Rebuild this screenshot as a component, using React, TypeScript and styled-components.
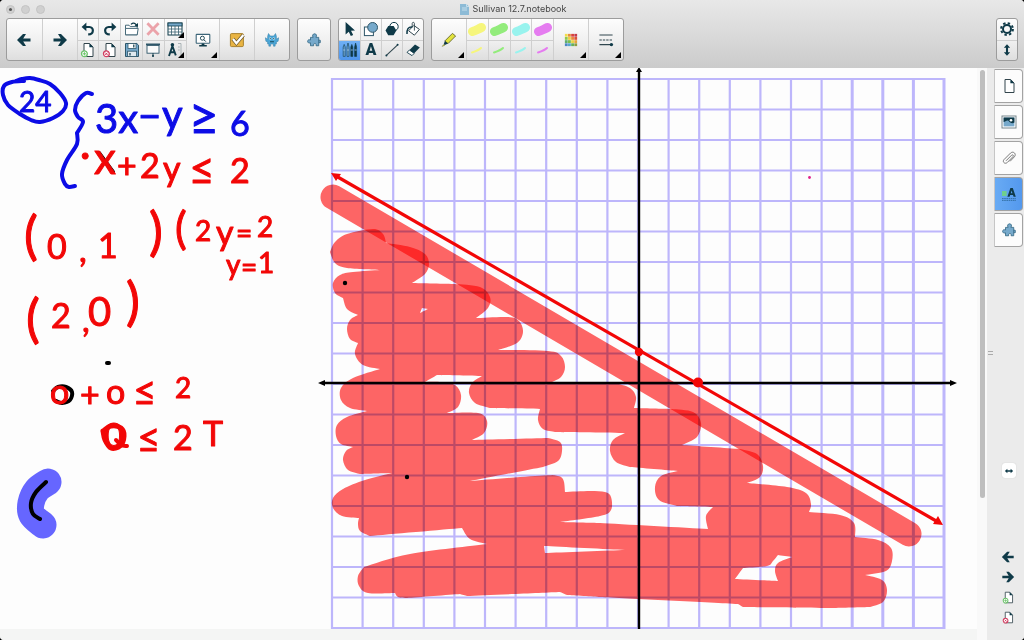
import React from 'react';
import styled, { createGlobalStyle, css } from 'styled-components';

const INK = '#0f3a48';
const STEEL = '#76a9cb';
const RED = '#f20707';
const BLUE = '#0c0ce6';

const GlobalStyle = createGlobalStyle`
  *, *::before, *::after { box-sizing: border-box; }
  html, body, #root { height: 100%; }
  body { margin: 0; background: #000; font-family: Inter, "Liberation Sans", sans-serif; }
`;

/* ---------- layout ---------- */

const Window = styled.div`
  display: flex;
  flex-direction: column;
  min-height: 100%;
  border-radius: 4px;
  overflow: hidden;
  background: #ebebeb;
`;

const Chrome = styled.header`
  background: linear-gradient(#e8e8e8, #dadada 50%, #cbcbcb);
`;

const TitleBar = styled.div`
  display: grid;
  grid-template-columns: 1fr auto 1fr;
  align-items: center;
  height: 18px;
  padding: 0 4px 0 6px;
`;

const Lights = styled.div`
  display: flex;
  gap: 6px;
`;

const Light = styled.button<{ $dot?: boolean }>`
  display: grid;
  place-items: center;
  width: 9px;
  height: 9px;
  padding: 0;
  border: 1px solid #c4c4c4;
  border-radius: 50%;
  background: #d0d0d0;
  &::after {
    content: '';
    width: 3px;
    height: 3px;
    border-radius: 50%;
    background: ${p => (p.$dot ? '#555' : 'transparent')};
  }
`;

const Title = styled.h1`
  display: flex;
  align-items: center;
  gap: 4px;
  margin: 0;
  font: 400 9px/16px Inter, "Liberation Sans", sans-serif;
  color: #444;
`;

const Toolbar = styled.div`
  display: flex;
  gap: 7px;
  height: 50px;
  padding: 0 6px 7px;
`;

const Group = styled.div<{ $width: number; $cols: string }>`
  display: grid;
  grid-template-columns: ${p => p.$cols};
  width: ${p => p.$width}px;
  border: 1px solid #9c9c9c;
  border-radius: 3px;
  background: linear-gradient(#fdfdfd, #f1f1f1 50%, #dedede);
  overflow: hidden;
`;

const RightGroup = styled(Group)`
  margin-left: auto;
`;

const Pairs = styled.div<{ $cols: number }>`
  display: grid;
  grid-template-columns: repeat(${p => p.$cols}, 1fr);
  grid-template-rows: 1fr 1fr;
`;

const Tool = styled.button<{ $active?: boolean; $more?: boolean; $bottom?: boolean; $first?: boolean }>`
  position: relative;
  display: grid;
  place-items: center;
  min-width: 0;
  padding: 0;
  border: 0;
  border-left: ${p => (p.$first ? '0' : '1px solid #cfcfcf')};
  border-top: ${p => (p.$bottom ? '1px solid #cfcfcf' : '0')};
  background: ${p => (p.$active ? 'linear-gradient(#6fb0f5, #4f95ec)' : 'transparent')};
  ${p => p.$more && css`
    &::after {
      content: '';
      position: absolute;
      right: 2px;
      bottom: 2px;
      border: 3px solid #000;
      border-top-color: transparent;
      border-left-color: transparent;
    }
  `}
`;

const Body = styled.div`
  flex: 1;
  display: grid;
  grid-template-columns: 1fr 10px 37px;
`;

const Page = styled.main`
  background: #f4f5f4;
`;

const Sheet = styled.svg`
  display: block;
  width: 100%;
  height: auto;
  background: #fdfdfd;
`;

const ScrollTrack = styled.div`
  padding: 2px 2px 0 3px;
  background: #f9f9f9;
`;

const ScrollThumb = styled.div`
  height: 75%;
  border-radius: 3px;
  background: #bebebe;
`;

const Sidebar = styled.aside`
  display: flex;
  flex-direction: column;
  background: #ebebeb;
`;

const Tabs = styled.nav`
  display: flex;
  flex-direction: column;
  gap: 2px;
  padding: 1px 1px 0 7px;
`;

const Tab = styled.button<{ $active?: boolean }>`
  display: grid;
  place-items: center;
  height: 34px;
  padding: 0;
  border: 1px solid #a3a3a3;
  border-left-color: #c6c6c6;
  border-radius: 0 4px 4px 0;
  background: ${p => (p.$active ? 'linear-gradient(90deg, #69abf4, #5398ed)' : '#fcfcfc')};
`;

const Handle = styled.div`
  width: 5px;
  height: 4px;
  margin: 104px 0 108px 1px;
  border-top: 1px solid #aaa;
  border-bottom: 1px solid #aaa;
`;

const WidthButton = styled.button`
  display: grid;
  place-items: center;
  width: 14px;
  height: 15px;
  margin-left: 15px;
  padding: 0;
  border: 0;
  border-radius: 3px;
  background: #fff;
  box-shadow: 0 0 1px #bbb;
`;

const PageNav = styled.div`
  display: flex;
  flex-direction: column;
  align-items: center;
  gap: 4px;
  margin-top: auto;
  padding: 0 0 15px 5px;
`;

const NavButton = styled.button`
  display: grid;
  place-items: center;
  width: 16px;
  height: 16px;
  padding: 0;
  border: 0;
  background: transparent;
`;

const Handwriting = styled.text`
  font-family: Lato, "DejaVu Sans", sans-serif;
  font-weight: 400;
  stroke-linejoin: round;
  stroke-width: 1px;
`;

/* ---------- icons ---------- */

const Svg = ({ s = 16, children }: { s?: number; children: React.ReactNode }) => (
  <svg width={s} height={s} viewBox="0 0 16 16" fill="none" aria-hidden="true">{children}</svg>
);

const Arrow = ({ right, s = 16 }: { right?: boolean; s?: number }) => (
  <Svg s={s}>
    <path transform={right ? 'matrix(-1 0 0 1 16 0)' : undefined} fill={INK}
      d="M1 8 7 2H10L7.200 6.500H14.500V9.500H7.200L10 14H7Z" />
  </Svg>
);

const Undo = ({ flip }: { flip?: boolean }) => (
  <Svg>
    <g transform={flip ? 'matrix(-1 0 0 1 16 0)' : undefined}>
      <path d="M4 6H9.4C14 6 14.4 13.4 8.2 13.4" stroke={INK} strokeWidth="2.2" />
      <path d="M1.6 6 6.4 1.6V10.2Z" fill={INK} />
    </g>
  </Svg>
);

const GREEN = '#6cc36a';
const PINK = '#d33d60';

const PageIcon = ({ badge, s }: { badge?: string; s?: number }) => (
  <Svg s={s}>
    <path d="M4 1.5H9.6L13 5V14.5H4Z" fill="#fff" stroke="#32454c" strokeWidth="1" />
    <path d="M9.4 1.2V5.2H13.3Z" fill={INK} />
    {badge && <>
      <circle cx="4.4" cy="11.8" r="2.9" fill="#fff" stroke={badge} strokeWidth="1.3" />
      {badge === PINK
        ? <path d="m3.2 10.6 2.4 2.4M5.6 10.6 3.2 13" stroke={badge} />
        : <path d="M4.4 10.2v3.2M2.8 11.8H6" stroke={badge} />}
    </>}
  </Svg>
);

const Folder = () => (
  <Svg>
    <path d="M1.5 13.8V4.2H5L6.2 5.6H13.2V13.8Z" fill="#fff" stroke="#476a79" />
    <path d="M1.5 7.4H14.2L13.2 13.8H1.5Z" fill="#fff" stroke="#476a79" />
    <path d="M7 3.4C9 1.4 11 1.8 12.4 4" stroke={INK} strokeWidth="1.3" />
    <path d="M10.6 4.4 14 2V6Z" fill={INK} />
  </Svg>
);

const Cross = () => (
  <Svg><path d="M2.4 2.2 13.6 13.8M13.6 2.2 2.4 13.8" stroke="#eba3aa" strokeWidth="2.8" /></Svg>
);

const Table = () => (
  <Svg>
    <rect x="1" y="2" width="14" height="12" fill="#fff" stroke={INK} />
    <rect x="1" y="2" width="14" height="3" fill={STEEL} stroke={INK} strokeWidth=".8" />
    <path d="M1 8H15M1 11H15M4.5 5V14M8 5V14M11.5 5V14" stroke="#37606f" strokeWidth=".8" />
  </Svg>
);

const Floppy = () => (
  <Svg>
    <path d="M1.5 1.5H12.8L14.5 3.2V14.5H1.5Z" fill={STEEL} stroke="#2e5669" />
    <rect x="4" y="1.5" width="8" height="5" fill="#fff" stroke="#2e5669" strokeWidth=".8" />
    <rect x="3.6" y="9.2" width="9" height="5.3" fill="#dfe9ef" stroke="#2e5669" strokeWidth=".8" />
    <path d="M9.8 2.6V5.4M6 11V13.6" stroke={INK} strokeWidth="1.2" />
  </Svg>
);

const Shade = () => (
  <Svg>
    <rect x="2" y="3.4" width="12" height="7.8" fill="#fafafa" stroke="#2e5669" strokeWidth=".9" />
    <path d="M1 2.4H15" stroke="#2e5669" strokeWidth="1.8" />
    <path d="M8 11.2V14" stroke={INK} /><circle cx="8" cy="14" r="1.1" fill={INK} />
  </Svg>
);

const Compass = () => (
  <Svg>
    <path d="M5.4 4 2 14M5.4 4 8.8 13.4M3.6 10.2H7.6" stroke={INK} strokeWidth="1.9" />
    <circle cx="5.4" cy="2.8" r="1.8" fill={INK} />
    <path d="M11 1.5H14V13M11 5H12.8M11 8H12.8" stroke="#9aa6aa" strokeWidth=".8" />
  </Svg>
);

const Monitor = () => (
  <Svg>
    <rect x="1.2" y="2.4" width="13.6" height="8.8" rx=".6" fill="#fff" stroke="#3c6578" strokeWidth="1.1" />
    <circle cx="7.4" cy="6.2" r="2" stroke={INK} strokeWidth=".9" />
    <path d="m8.8 7.6 2 2" stroke={INK} />
    <path d="M6.6 11.4H9.4V13H11.8V14.4H4.2V13H6.6Z" fill={INK} />
  </Svg>
);

const Check = () => (
  <Svg>
    <rect x="1.4" y="1.6" width="13" height="13" rx="1.2" fill="#e9b443" stroke="#a98331" />
    <path d="m4 7 3.4 4.2L14.4 3" stroke="#6d5a30" strokeWidth="3.6" />
    <path d="m4 7 3.4 4.2L14.4 3" stroke="#fff" strokeWidth="2.2" />
  </Svg>
);

const Monster = () => (
  <Svg s={14}>
    <path d="M4 .6 6 3.400H10L12 .6 13 3.600V7L15.600 5.400 15 9.400 13 10.200V12.600H11.600V15H9.600V12.600H6.400V15H4.400V12.600H3V10.200L1 9.400.4 5.400 3 7V3.600Z" fill="#4ba6d6" stroke="#357fa8" strokeWidth=".6" />
    <circle cx="6" cy="6.4" r="1.3" fill="#e9f5fb" /><circle cx="10" cy="6.4" r="1.3" fill="#e9f5fb" />
    <circle cx="6" cy="6.4" r=".7" fill={INK} /><circle cx="10" cy="6.4" r=".7" fill={INK} />
    <path d="M5.8 10H10.2" stroke={INK} />
  </Svg>
);

const Puzzle = () => (
  <Svg s={14}>
    <path d="M4 5H7C5.600 2.800 6.800.9 8.700.9S11.600 2.800 10.200 5H13.400V14.600H10.400C10.800 12.400 9.900 12 9 12S7.200 12.600 7.600 14.600H4V11.200C2 12 .7 11 .7 9.500S2 7.200 4 8ZM13.400 8 15.200 8.400V11L13.400 11.200" fill={STEEL} stroke="#2e6380" strokeWidth=".9" />
  </Svg>
);

const Pointer = () => (
  <Svg><path d="M3.6 1 13 9.6 9 9.8 11.2 14 8.8 15 6.8 10.8 3.6 13.4Z" fill={INK} /></Svg>
);

const Shapes = () => (
  <Svg>
    <rect x="1.4" y="6" width="9" height="8.6" fill="#fff" stroke="#2e5669" />
    <circle cx="9.6" cy="6.4" r="4.9" fill={STEEL} stroke="#2e5669" />
  </Svg>
);

const Polygon = () => (
  <Svg>
    <circle cx="10" cy="5.6" r="4.2" fill="#fff" stroke={INK} />
    <path d="M4.2 5H9.6L12.4 9.6 9.6 14.2H4.2L1.5 9.6Z" fill={INK} />
  </Svg>
);

const Bucket = () => (
  <Svg>
    <path d="m8.800 4.400 5.600 4-5 5.800-5.800-4.400Z" fill="#fff" stroke="#31474f" />
    <path d="M9.400 9.600V2.400C9.400 1 7.200 1 7.200 2.400V6" stroke="#31474f" strokeWidth=".9" />
    <path d="M7.400 6C3 5.600 1.800 8.400 2 13" stroke={INK} strokeWidth="1.500" />
  </Svg>
);

const Pens = () => (
  <Svg>
    {[1.2, 5, 8.8, 12.6].map((x, i) => (
      <g key={x}>
        <path d={`M${x} 5 ${x + 1} ${i % 2 ? 1 : 2.4} ${x + 2} 5V14.4H${x}Z`} fill={i > 1 ? INK : '#6fa6d6'} stroke={INK} strokeWidth=".6" />
        <path d={`M${x} 8H${x + 2}`} stroke="#a8cdf0" strokeWidth=".8" />
      </g>
    ))}
  </Svg>
);

const Letter = styled.span`
  font: 900 16px/16px Roboto, "Liberation Sans", sans-serif;
  color: ${INK};
`;

const Line = () => (
  <Svg>
    <path d="M2.4 13.4 13.6 2.8" stroke="#31474f" strokeWidth="1.1" />
    <circle cx="2.4" cy="13.4" r="1" fill={INK} /><circle cx="13.6" cy="2.8" r="1" fill={INK} />
  </Svg>
);

const Eraser = () => (
  <Svg>
    <path d="m10 2.4 4.8 3.2L7 13.6 2 10.4Z" fill={INK} />
    <path d="m4.4 8 4.8 3.4L7 13.6 2 10.4Z" fill="#fff" stroke={INK} strokeWidth=".8" />
  </Svg>
);

const Highlighter = () => (
  <Svg>
    <path d="M11.4 1.4 14.6 4 7 11.6 3.8 9Z" fill="#e2e33c" stroke="#66682a" strokeWidth=".9" />
    <path d="m3.8 9 3.2 2.6-3.2 1.4-1-.8Z" fill={INK} />
    <path d="m2.8 12.4 1 .8-2.6 1.2Z" fill="#e2e33c" stroke="#66682a" strokeWidth=".5" />
  </Svg>
);

const Swatch = ({ c, thin }: { c: string; thin?: boolean }) => (
  <svg width="20" height="16" viewBox="0 0 20 16" aria-hidden="true">
    <path d={thin ? 'M5 10.5C8 9.5 12 8 14 6' : 'M5.5 10.5C9 9.5 11 8 14.5 6.5'} fill="none" stroke={c}
      strokeWidth={thin ? 2 : 9} strokeLinecap="round" />
  </svg>
);

const PALETTE = [
  ['#f3dc4b', '#e78c3c', '#d9423c', '#c33a4a'],
  ['#8fc84c', '#f0cf3e', '#e9883b', '#dd5038'],
  ['#5fae6b', '#79bd49', '#e9d245', '#e7a23c'],
  ['#4a86c4', '#54a5cf', '#62b05c', '#8e9c3e'],
];

const Colours = () => (
  <Svg s={14}>
    {PALETTE.flatMap((row, r) => row.map((fill, c) => (
      <rect key={`${r}${c}`} x={1 + c * 3.6} y={1 + r * 3.6} width="3.2" height="3.2" fill={fill} />
    )))}
  </Svg>
);

const LineStyles = () => (
  <Svg>
    <path d="M1.4 3H14.6" stroke="#31474f" />
    <path d="M1.4 8H14.6" stroke="#31474f" strokeDasharray="2.4 1" />
    <path d="M1.4 12.6H14" stroke="#31474f" strokeWidth="1.1" /><circle cx="13.4" cy="12.6" r="1.7" fill={INK} />
  </Svg>
);

const Gear = () => (
  <Svg>
    <circle cx="8" cy="8" r="4" stroke={INK} strokeWidth="2" />
    <circle cx="8" cy="8" r="5.9" stroke={INK} strokeWidth="2" strokeDasharray="2.4 2.234" />
  </Svg>
);

const DoubleArrow = ({ flat }: { flat?: boolean }) => (
  <Svg s={flat ? 10 : 14}>
    <g transform={flat ? 'rotate(90 8 8)' : undefined} fill={INK}>
      <path d="M8 1.4 11.6 5.4H9.2V10.6H11.6L8 14.6 4.4 10.6H6.8V5.4H4.4Z" />
    </g>
  </Svg>
);

const Picture = () => (
  <Svg>
    <rect x="1" y="2" width="14" height="12" fill="#fff" stroke="#76868c" />
    <rect x="2.6" y="3.6" width="10.8" height="8.8" fill={STEEL} />
    <path d="M2.6 3.6H13.4V8.6C11 10.4 9 8.6 7.4 6.8 6 5.6 4.4 7.4 2.6 8Z" fill={INK} />
    <circle cx="10" cy="6.2" r="1.3" fill="#fff" />
  </Svg>
);

const Clip = () => (
  <Svg>
    <path d="M5 10.800 10.600 5.200C11.800 4.200 13 5.400 12 6.600L6.400 12.400C4 14.600 1 12 3 9.600L9.600 3C12.400.6 15.800 4 13.400 6.800L9 11.400" stroke="#7a7a7a" />
  </Svg>
);

const TextTab = () => (
  <Svg>
    <rect x="1" y="5" width="4.6" height="5" fill="#6fcf8c" />
    <path d="M6.4 10.8 9.4 2H11.8L14.8 10.8H12.6L12 9H9.2L8.6 10.8ZM9.8 7.2H11.4L10.6 4.6Z" fill={INK} />
    <path d="M1 12.6H15M1 14.4H15" stroke="#2f6b9d" strokeWidth=".9" strokeDasharray="1.6 .6" />
  </Svg>
);

/* ---------- page ink ---------- */

type Pt = [number, number];

/** Builds a curve through "x,y" points; a "|" marks the point before it as a sharp corner. */
const trace = (src: string, close = false) => {
  const runs = src.split('|').map(r => r.trim().split(/\s+/).map(p => p.split(',').map(Number) as Pt));
  for (let i = 1; i < runs.length; i++) runs[i].unshift(runs[i - 1][runs[i - 1].length - 1]);
  let d = `M${runs[0][0]}`;
  runs.forEach(r => {
    for (let i = 0; i < r.length - 1; i++) {
      const a = r[i - 1] ?? r[i], b = r[i], c = r[i + 1], e = r[i + 2] ?? c;
      d += `C${b[0] + (c[0] - a[0]) / 6} ${b[1] + (c[1] - a[1]) / 6} ${c[0] - (e[0] - b[0]) / 6} ${c[1] - (e[1] - b[1]) / 6} ${c[0]} ${c[1]}`;
    }
  });
  return close ? d + 'Z' : d;
};

const SHADING = [
  '330,252 335,242 347,234 373,229 383,234 386,243 | 410,247 425,254 429,264 425,274 412,283 | 455,284 | 480,287 490,297 488,308 476,318 | 508,317 519,321 523,332 517,343 498,350 | 548,351 561,356 565,367 561,377 550,383 | 615,383 | 630,388 636,397 634,408 | 672,409 | 693,412 701,423 697,437 682,445 | 740,449 | 757,454 763,466 760,477 747,483 | 787,487 806,493 811,504 809,512 | 840,515 854,523 855,537 | 878,540 891,548 892,561 886,571 865,575 | 882,580 887,590 883,602 870,607 | 833,608 | 743,607 | 738,604 | 600,597 | 567,595 | 560,592 | 467,596 | 460,594 | 407,598 | 398,597 395,593 | 368,593 359,586 358,576 364,567 | 410,554 487,544 | 470,539 462,528 | 370,536 | 360,531 358,524 359,518 | 342,516 333,508 333,498 343,489 365,480 392,473 | 360,474 | 348,470 343,460 346,451 353,447 | 341,444 336,436 337,425 347,417 367,411 | 350,408 341,400 341,388 353,378 380,369 | 363,365 355,354 358,343 | 350,339 347,329 350,320 358,315 | 347,309 343,298 | 335,293 333,283 340,275 353,272 380,270 | 347,268 335,263 330,252',
  '420,313 | 422,308 | 428,309 | 420,313',
  '425,382 | 437,375 | 482,376 | 472,383 469,393 475,403 490,408 | 540,409 | 538,420 543,429 555,432 | 625,433 | 613,440 610,451 616,462 630,467 | 678,471 | 661,476 655,487 659,500 677,506 | 713,507 | 706,516 708,529 | 600,523 | 560,522 | 600,516 611,510 611,497 605,492 590,491 565,492 | 564,482 561,477 553,475 | 520,477 470,481 | 543,467 | 558,461 562,451 560,442 548,438 | 472,440 | 484,433 487,421 478,413 447,413 | 458,407 461,395 455,385 440,382 425,382',
  '544,546 | 545,553 | 625,550 | 544,546',
  '743,568 | 767,566 773,561 778,555 | 792,557 | 778,563 775,571 778,581 | 735,579 | 743,568',
].map(p => trace(p, true)).join('');

type Word = [text: string, x: number, y: number, size: number];

const BLUE_WORDS: Word[] = [
  ['24', 19, 112, 28], ['3x', 95, 133, 40], ['−', 138, 130, 40], ['y', 162, 129, 40], ['≥', 189, 135, 52], ['6', 230, 136, 34],
];

const RED_WORDS: Word[] = [
  ['·', 80, 168, 40], ['x', 94, 174, 44], ['+', 117, 178, 34], ['2', 140, 178, 34], ['y', 163, 181, 34], ['≤', 189, 185, 44], ['2', 230, 183, 34],
  ['(', 24, 254, 52], ['0', 47, 259, 34], [',', 79, 262, 34], ['1', 98, 258, 34], [')', 149, 250, 52],
  ['(', 175, 244, 44], ['2', 195, 241, 28], ['y', 216, 245, 34], ['=', 236, 243, 28], ['2', 257, 237, 28],
  ['y', 226, 275, 28], ['=', 241, 277, 28], ['1', 258, 273, 28],
  ['(', 26, 337, 52], ['2', 51, 328, 34], [',', 82, 332, 34], ['0', 88, 326, 40], [')', 126, 320, 52],
  ['o', 50, 404, 34], ['+', 80, 407, 34], ['o', 106, 404, 34], ['≤', 133, 406, 40], ['2', 175, 398, 28],
  ['0', 104, 448, 34], ['≤', 137, 453, 40], ['2', 173, 450, 34], ['T', 203, 446, 34],
];

const Words = ({ items, color }: { items: Word[]; color: string }) => (
  <g fill={color} stroke={color}>
    {items.map(([t, x, y, size]) => (
      <Handwriting key={`${x}-${y}`} x={x} y={y} fontSize={size}>{t}</Handwriting>
    ))}
  </g>
);

const steps = (n: number) => Array.from({ length: n }, (_, i) => i);

const Notebook = () => (
  <Sheet viewBox="0 68 977 561" role="img" aria-label="Graph of x + 2y ≤ 2 with worked steps">
    <g stroke="#bdb6fb" strokeWidth="2.2" fill="none">
      {steps(21).map(i => <path key={i} d={`M${332 + i * 30.6} 78V629`} strokeWidth={i > 16 ? 3 : undefined} />)}
      {steps(19).map(i => <path key={i} d={`M331 ${79 + i * 30.5}H945`} />)}
    </g>

    <g stroke="#000" strokeWidth="2.4" fill="#000">
      <path d="M639 70V629M323 383H951" />
      <path stroke="none" d="M639 67 642 72H636ZM318 383 325 380V386ZM957 383 950 380V386Z" />
    </g>

    <g style={{ mixBlendMode: 'multiply' }}>
      <path d={SHADING} fill="#ff6666" fillRule="evenodd" />
    </g>
    <path d="M333 197 909 534" stroke="#ff6666" strokeWidth="25" strokeLinecap="round" style={{ mixBlendMode: 'multiply' }} />

    <g stroke={RED} strokeWidth="3.2" fill={RED}>
      <path d="M336 176 938 522" />
      <path stroke="none" d="M331 173 341 174 336 181ZM943 525 933 524 938 516Z" />
      <circle cx="639" cy="352" r="2.6" /><circle cx="698" cy="382.5" r="3.4" />
    </g>
    <circle cx="345" cy="283" r="2.2" /><circle cx="407" cy="477" r="2.2" />
    <circle cx="809.5" cy="177.5" r="1.4" fill="#e0218a" />

    <g fill="none" strokeLinecap="round" strokeLinejoin="round" strokeWidth="4">
      <path stroke={BLUE} d={trace('24,81 12,82 4,86 3,95 8,105 20,114 31,120 40,122 53,118 63,111 66,103 60,93 50,84 39,80 30,78 22,79 16,81')} />
      <path stroke={BLUE} d={trace('92,94 86,93 78,101 75,110 78,117 83,122 77,133 | 77,144 67,160 62,174 65,184 69,187 75,186')} />
      <path stroke="#000" d="M99 153 113 172" />
      <path stroke="#000" d="M107 363H109" />
      <path stroke="#000" strokeWidth="4" d={trace('53,391 58,387 66,387 72,392 70,400 62,403 56,401')} />
      <path stroke={RED} strokeWidth="5" d={trace('103,431 111,426 121,428 124,436 120,446 111,448 105,440 103,431')} />
      <path stroke={RED} d={trace('116,440 121,445 127,446')} />
      <path stroke="#6666ff" strokeWidth="27" d={trace('48,482 37,490 31,503 32,515 43,525')} />
      <path stroke="#000" d={trace('46,482 36,492 31,503 33,514 40,519')} />
    </g>
    <Words items={BLUE_WORDS} color={BLUE} />
    <Words items={RED_WORDS} color={RED} />
  </Sheet>
);

/* ---------- app ---------- */

const PAGE_TOOLS: [string, React.ReactNode, boolean?][] = [
  ['Undo', <Undo />], ['Redo', <Undo flip />], ['Open', <Folder />], ['Delete', <Cross />], ['Table', <Table />, true],
  ['Add page', <PageIcon badge={GREEN} />], ['Delete page', <PageIcon badge={PINK} />], ['Save', <Floppy />], ['Screen shade', <Shade />], ['Measurement tools', <Compass />, true],
];

const DRAW_TOOLS: [string, React.ReactNode][] = [
  ['Select', <Pointer />], ['Shapes', <Shapes />], ['Regular polygons', <Polygon />], ['Fill', <Bucket />],
  ['Pens', <Pens />], ['Text', <Letter>A</Letter>], ['Lines', <Line />], ['Eraser', <Eraser />],
];

const INKS = ['#f6f67c', '#93ec7c', '#98f3ee', '#e57cf0'];

export default function App() {
  return (
    <>
      <GlobalStyle />
      <Window>
        <Chrome>
          <TitleBar>
            <Lights>
              <Light $dot aria-label="Close" /><Light aria-label="Minimise" /><Light aria-label="Zoom" />
            </Lights>
            <Title>
              <svg width="9" height="11" viewBox="0 0 9 11" aria-hidden="true">
                <path d="M0 0H6.5L9 2.5V11H0Z" fill="#8dbbd6" /><path d="M6.5 0V2.5H9M2 4H7M2 6H7" stroke="#c6dfec" fill="none" />
              </svg>
              Sullivan 12.7.notebook
            </Title>
          </TitleBar>
          <Toolbar>
            <Group $width={284} $cols="35fr 35fr 110fr 34fr 35fr 35fr">
              <Tool $first aria-label="Previous page"><Arrow /></Tool>
              <Tool aria-label="Next page"><Arrow right /></Tool>
              <Pairs $cols={5}>
                {PAGE_TOOLS.map(([n, icon, more], i) => (
                  <Tool key={n} aria-label={n} $bottom={i > 4} $more={more}>{icon}</Tool>
                ))}
              </Pairs>
              <Tool $more aria-label="View"><Monitor /></Tool>
              <Tool aria-label="Response"><Check /></Tool>
              <Tool aria-label="Activities"><Monster /></Tool>
            </Group>
            <Group $width={34} $cols="1fr">
              <Tool $first aria-label="Add-ons"><Puzzle /></Tool>
            </Group>
            <Group $width={86} $cols="1fr">
              <Pairs $cols={4}>
                {DRAW_TOOLS.map(([n, icon], i) => (
                  <Tool key={n} aria-label={n} $first={i % 4 === 0} $bottom={i > 3} $active={n === 'Pens'}>{icon}</Tool>
                ))}
              </Pairs>
            </Group>
            <Group $width={193} $cols="34fr 88fr 35fr 35fr">
              <Tool $first $more aria-label="Highlighter"><Highlighter /></Tool>
              <Pairs $cols={4}>
                {[...INKS, ...INKS].map((c, i) => (
                  <Tool key={i} aria-label={`Ink ${i + 1}`} $bottom={i > 3}><Swatch c={c} thin={i > 3} /></Tool>
                ))}
              </Pairs>
              <Tool $more aria-label="Colours"><Colours /></Tool>
              <Tool $more aria-label="Line styles"><LineStyles /></Tool>
            </Group>
            <RightGroup $width={22} $cols="1fr">
              <Pairs $cols={1}>
                <Tool $first aria-label="Settings"><Gear /></Tool>
                <Tool $first $bottom aria-label="Move toolbar"><DoubleArrow /></Tool>
              </Pairs>
            </RightGroup>
          </Toolbar>
        </Chrome>
        <Body>
          <Page><Notebook /></Page>
          <ScrollTrack><ScrollThumb /></ScrollTrack>
          <Sidebar>
            <Tabs>
              <Tab aria-label="Page sorter"><PageIcon /></Tab>
              <Tab aria-label="Gallery"><Picture /></Tab>
              <Tab aria-label="Attachments"><Clip /></Tab>
              <Tab $active aria-label="Properties"><TextTab /></Tab>
              <Tab aria-label="Add-ons panel"><Puzzle /></Tab>
            </Tabs>
            <Handle />
            <WidthButton aria-label="Resize sidebar"><DoubleArrow flat /></WidthButton>
            <PageNav>
              <NavButton aria-label="Back"><Arrow s={14} /></NavButton>
              <NavButton aria-label="Forward"><Arrow right s={14} /></NavButton>
              <NavButton aria-label="New page"><PageIcon s={13} badge={GREEN} /></NavButton>
              <NavButton aria-label="Remove page"><PageIcon s={13} badge={PINK} /></NavButton>
            </PageNav>
          </Sidebar>
        </Body>
      </Window>
    </>
  );
}
